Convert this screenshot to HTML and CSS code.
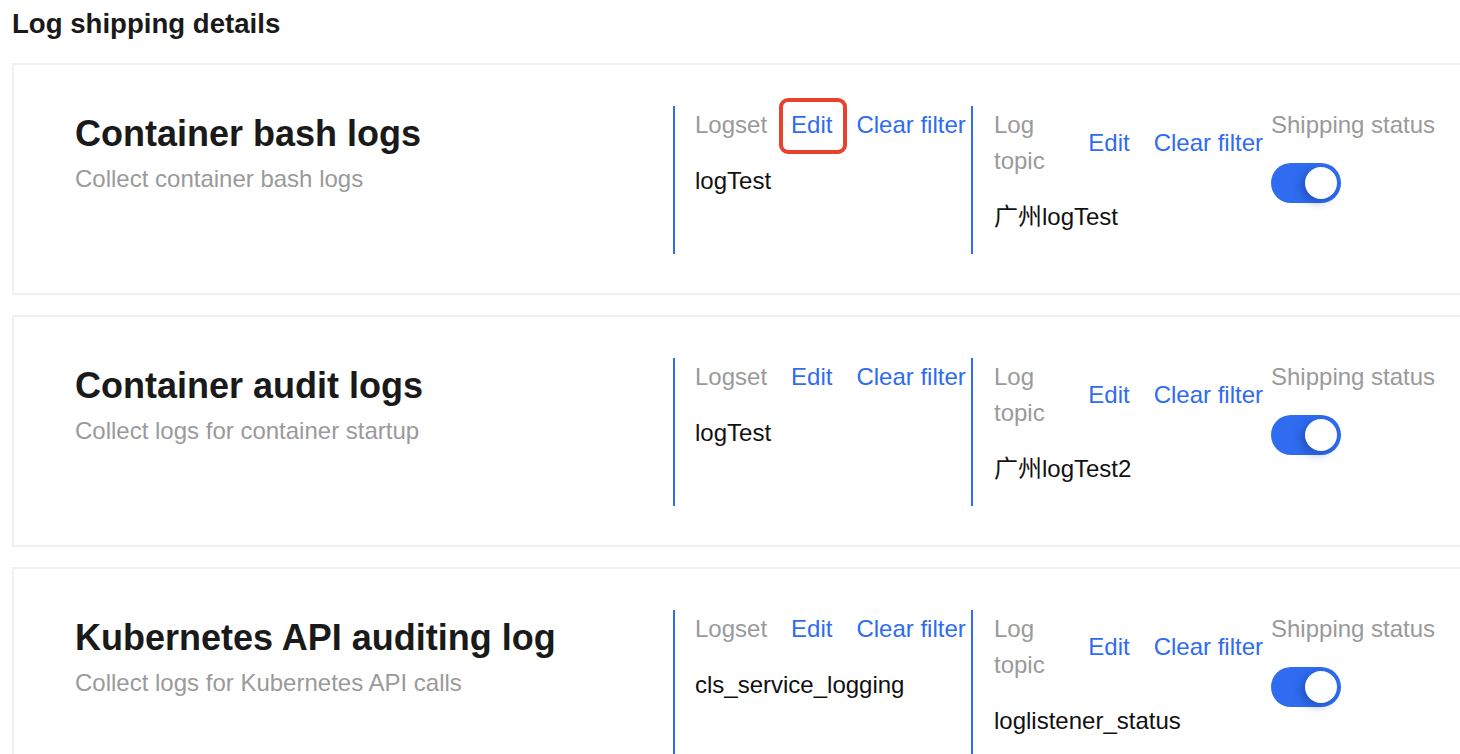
FILE: index.html
```html
<!DOCTYPE html>
<html lang="en">
<head>
<meta charset="utf-8">
<title>Log shipping details</title>
<link rel="stylesheet" href="styles.css">
</head>
<body>
<div class="page">
  <h1 class="page-title">Log shipping details</h1>

  <section class="card">
    <div class="row">
      <div class="intro">
        <h2 class="intro-title">Container bash logs</h2>
        <p class="intro-desc">Collect container bash logs</p>
      </div>
      <div class="col col-logset">
        <div class="col-head">
          <span class="label">Logset</span>
          <a class="link highlight">Edit<span class="mark"></span></a>
          <a class="link">Clear filter</a>
        </div>
        <div class="value">logTest</div>
      </div>
      <div class="col col-topic">
        <div class="col-head">
          <span class="label">Log topic</span>
          <a class="link">Edit</a>
          <a class="link">Clear filter</a>
        </div>
        <div class="value">广州logTest</div>
      </div>
      <div class="status">
        <span class="label">Shipping status</span>
        <span class="switch on"><span class="knob"></span></span>
      </div>
    </div>
  </section>

  <section class="card">
    <div class="row">
      <div class="intro">
        <h2 class="intro-title">Container audit logs</h2>
        <p class="intro-desc">Collect logs for container startup</p>
      </div>
      <div class="col col-logset">
        <div class="col-head">
          <span class="label">Logset</span>
          <a class="link">Edit</a>
          <a class="link">Clear filter</a>
        </div>
        <div class="value">logTest</div>
      </div>
      <div class="col col-topic">
        <div class="col-head">
          <span class="label">Log topic</span>
          <a class="link">Edit</a>
          <a class="link">Clear filter</a>
        </div>
        <div class="value">广州logTest2</div>
      </div>
      <div class="status">
        <span class="label">Shipping status</span>
        <span class="switch on"><span class="knob"></span></span>
      </div>
    </div>
  </section>

  <section class="card">
    <div class="row">
      <div class="intro">
        <h2 class="intro-title">Kubernetes API auditing log</h2>
        <p class="intro-desc">Collect logs for Kubernetes API calls</p>
      </div>
      <div class="col col-logset">
        <div class="col-head">
          <span class="label">Logset</span>
          <a class="link">Edit</a>
          <a class="link">Clear filter</a>
        </div>
        <div class="value">cls_service_logging</div>
      </div>
      <div class="col col-topic">
        <div class="col-head">
          <span class="label">Log topic</span>
          <a class="link">Edit</a>
          <a class="link">Clear filter</a>
        </div>
        <div class="value">loglistener_status</div>
      </div>
      <div class="status">
        <span class="label">Shipping status</span>
        <span class="switch on"><span class="knob"></span></span>
      </div>
    </div>
  </section>
</div>
</body>
</html>
```
FILE: styles.css
```css
html, body {
  margin: 0;
  padding: 0;
  background: #ffffff;
  overflow: hidden;
}

body {
  font-family: "Liberation Sans", Arial, "Noto Sans CJK SC", sans-serif;
  color: #1a1a1a;
}

.page {
  padding: 7px 0 0 12px;
  display: flex;
  flex-direction: column;
  gap: 20px;
}

.page-title {
  margin: 0 0 2px 0;
  font-size: 27.6px;
  line-height: 34px;
  font-weight: 700;
  color: #1a1a1a;
}

.card {
  width: 1500px;
  box-sizing: border-box;
  border: 2px solid #eff0f4;
  padding: 41px 0 39px 61px;
}

.row {
  display: flex;
  align-items: stretch;
}

.intro {
  flex: 0 0 598px;
  padding-top: 6px;
}

.intro-title {
  margin: 0;
  font-size: 36px;
  line-height: 43px;
  font-weight: 700;
  color: #1a1a1a;
}

.intro-desc {
  margin: 6px 0 0 0;
  font-size: 24px;
  line-height: 36px;
  color: #9a9a9a;
}

.col {
  box-sizing: border-box;
  border-left: 2px solid #2f6cf0;
  display: flex;
  flex-direction: column;
  gap: 20px;
  font-size: 24px;
  line-height: 36px;
  padding-top: 1px;
  padding-bottom: 19px;
}

.col-logset {
  flex: 0 0 298px;
  padding-left: 20px;
}

.col-topic {
  flex: 0 0 292px;
  padding-left: 21px;
}

.col-head {
  display: flex;
  align-items: center;
  gap: 24px;
}

.label {
  color: #9a9a9a;
  font-size: 24px;
  line-height: 36px;
}

.col-head .label {
  min-width: 0;
}

.link {
  position: relative;
  color: #2f6cf0;
  white-space: nowrap;
  cursor: pointer;
}

.value {
  color: #111111;
}

.mark {
  position: absolute;
  left: -12px;
  right: -15px;
  top: -9px;
  bottom: -11px;
  border: 4px solid #e8412c;
  border-radius: 9px;
  pointer-events: none;
}

.status {
  margin-left: 8px;
  padding-top: 1px;
  display: flex;
  flex-direction: column;
  align-items: flex-start;
  gap: 20px;
}

.status .label {
  white-space: nowrap;
}

.switch {
  position: relative;
  display: block;
  width: 70px;
  height: 40px;
  border-radius: 20px;
  background: #2f6cf0;
}

.switch .knob {
  position: absolute;
  top: 4px;
  right: 4px;
  width: 32px;
  height: 32px;
  border-radius: 50%;
  background: #ffffff;
  box-shadow: -4px 3px 8px rgba(20, 50, 140, 0.45);
}
```
